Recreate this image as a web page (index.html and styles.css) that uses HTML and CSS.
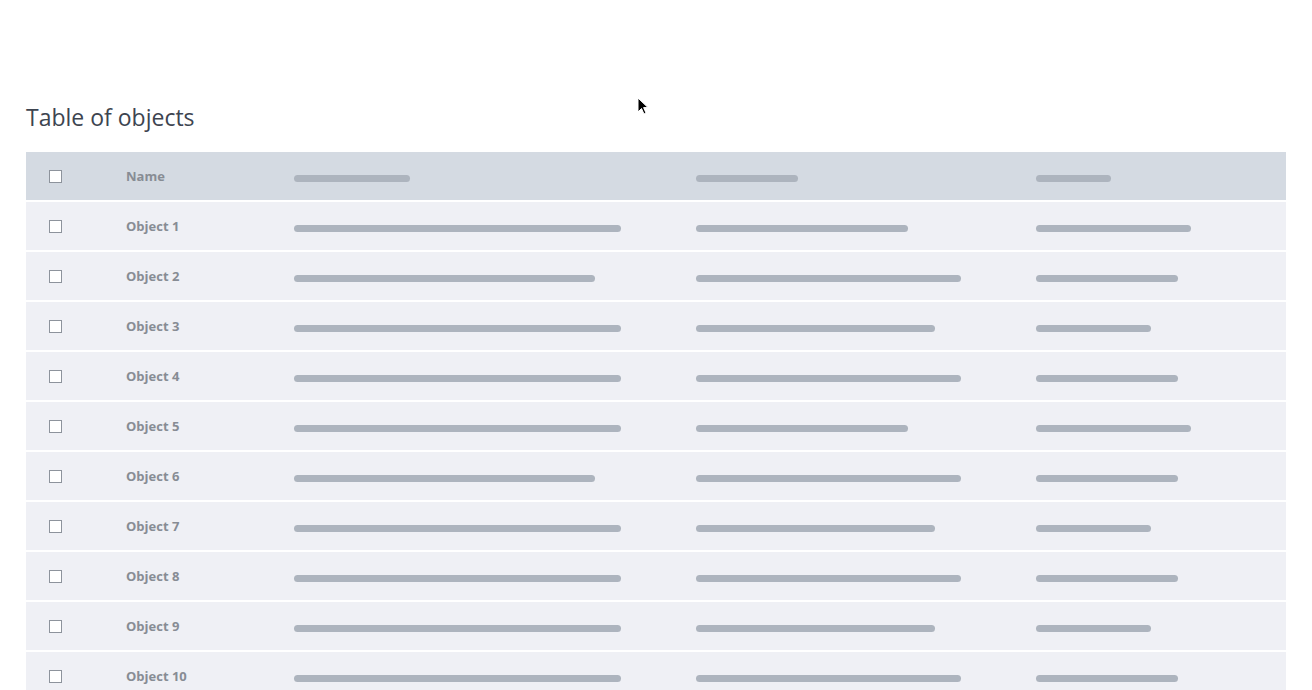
FILE: index.html
```html
<!DOCTYPE html>
<html>
<head>
<meta charset="utf-8">
<link rel="stylesheet" href="styles.css">
</head>
<body>
<div class="page">
  <h1 class="title">Table of objects</h1>
  <div class="table">
    <div class="row head">
      <div class="cell chk"><span class="box"></span></div>
      <div class="cell name">Name</div>
      <div class="cell"><span class="bar" style="width:116px"></span></div>
      <div class="cell"><span class="bar" style="width:102px"></span></div>
      <div class="cell"><span class="bar" style="width:75px"></span></div>
    </div>
    <div class="row"><div class="cell chk"><span class="box"></span></div><div class="cell name">Object 1</div><div class="cell"><span class="bar" style="width:327px"></span></div><div class="cell"><span class="bar" style="width:212px"></span></div><div class="cell"><span class="bar" style="width:155px"></span></div></div>
    <div class="row"><div class="cell chk"><span class="box"></span></div><div class="cell name">Object 2</div><div class="cell"><span class="bar" style="width:301px"></span></div><div class="cell"><span class="bar" style="width:265px"></span></div><div class="cell"><span class="bar" style="width:142px"></span></div></div>
    <div class="row"><div class="cell chk"><span class="box"></span></div><div class="cell name">Object 3</div><div class="cell"><span class="bar" style="width:327px"></span></div><div class="cell"><span class="bar" style="width:239px"></span></div><div class="cell"><span class="bar" style="width:115px"></span></div></div>
    <div class="row"><div class="cell chk"><span class="box"></span></div><div class="cell name">Object 4</div><div class="cell"><span class="bar" style="width:327px"></span></div><div class="cell"><span class="bar" style="width:265px"></span></div><div class="cell"><span class="bar" style="width:142px"></span></div></div>
    <div class="row"><div class="cell chk"><span class="box"></span></div><div class="cell name">Object 5</div><div class="cell"><span class="bar" style="width:327px"></span></div><div class="cell"><span class="bar" style="width:212px"></span></div><div class="cell"><span class="bar" style="width:155px"></span></div></div>
    <div class="row"><div class="cell chk"><span class="box"></span></div><div class="cell name">Object 6</div><div class="cell"><span class="bar" style="width:301px"></span></div><div class="cell"><span class="bar" style="width:265px"></span></div><div class="cell"><span class="bar" style="width:142px"></span></div></div>
    <div class="row"><div class="cell chk"><span class="box"></span></div><div class="cell name">Object 7</div><div class="cell"><span class="bar" style="width:327px"></span></div><div class="cell"><span class="bar" style="width:239px"></span></div><div class="cell"><span class="bar" style="width:115px"></span></div></div>
    <div class="row"><div class="cell chk"><span class="box"></span></div><div class="cell name">Object 8</div><div class="cell"><span class="bar" style="width:327px"></span></div><div class="cell"><span class="bar" style="width:265px"></span></div><div class="cell"><span class="bar" style="width:142px"></span></div></div>
    <div class="row"><div class="cell chk"><span class="box"></span></div><div class="cell name">Object 9</div><div class="cell"><span class="bar" style="width:327px"></span></div><div class="cell"><span class="bar" style="width:239px"></span></div><div class="cell"><span class="bar" style="width:115px"></span></div></div>
    <div class="row"><div class="cell chk"><span class="box"></span></div><div class="cell name">Object 10</div><div class="cell"><span class="bar" style="width:327px"></span></div><div class="cell"><span class="bar" style="width:265px"></span></div><div class="cell"><span class="bar" style="width:142px"></span></div></div>
  </div>
</div>
<svg class="cursor" width="12" height="19" viewBox="0 0 12 19"><path d="M1 1 L1 15 L4.5 11.5 L7 17 L9 16 L6.6 10.6 L11 10.6 Z" fill="#000" stroke="#fff" stroke-width="1"/></svg>
</body>
</html>
```

FILE: styles.css
```css
html, body {
  margin: 0;
  padding: 0;
  background: #ffffff;
  overflow: hidden;
}
.page {
  padding: 102px 26px 0 26px;
  font-family: "Open Sans", "Liberation Sans", sans-serif;
}
.title {
  margin: 0 0 19px 0;
  font-size: 23px;
  line-height: 31px;
  font-weight: 400;
  color: #3d4450;
  letter-spacing: 0;
}
.table {
  display: flex;
  flex-direction: column;
  gap: 2px;
}
.row {
  display: grid;
  grid-template-columns: 100px 168px 402px 340px 1fr;
  height: 48px;
  align-items: center;
  background: #eff0f5;
}
.row.head {
  background: #d4dae2;
}
.cell {
  display: flex;
  align-items: center;
}
.chk {
  padding-left: 23px;
}
.box {
  display: block;
  width: 11px;
  height: 11px;
  border: 1px solid #8d939c;
  background: #ffffff;
}
.name {
  font-size: 13px;
  font-weight: 700;
  color: #878c94;
}
.bar {
  display: block;
  height: 7px;
  border-radius: 4px;
  background: #adb4be;
  margin-top: 4px;
}
.cursor {
  position: absolute;
  left: 637px;
  top: 97px;
}
```
